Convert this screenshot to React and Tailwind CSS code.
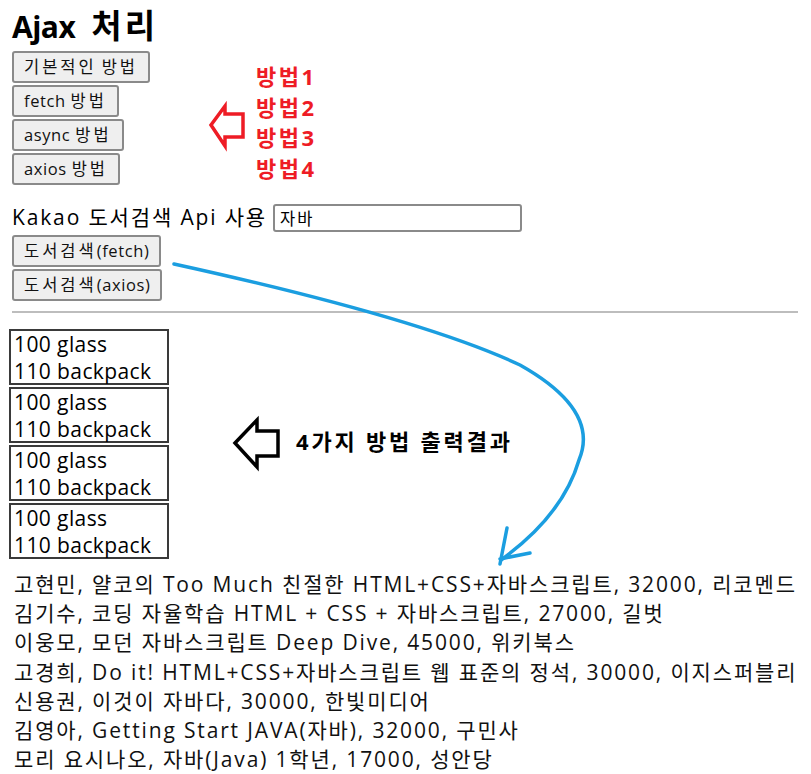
const BOOKS = [
  '고현민, 얄코의 Too Much 친절한 HTML+CSS+자바스크립트, 32000, 리코멘드',
  '김기수, 코딩 자율학습 HTML + CSS + 자바스크립트, 27000, 길벗',
  '이웅모, 모던 자바스크립트 Deep Dive, 45000, 위키북스',
  '고경희, Do it! HTML+CSS+자바스크립트 웹 표준의 정석, 30000, 이지스퍼블리',
  '신용권, 이것이 자바다, 30000, 한빛미디어',
  '김영아, Getting Start JAVA(자바), 32000, 구민사',
  '모리 요시나오, 자바(Java) 1학년, 17000, 성안당',
]

const METHODS = ['기본적인 방법', 'fetch 방법', 'async 방법', 'axios 방법']

// hangul runs get wider letter spacing than latin ones, like the original font
const split = (s) =>
  s.split(/([가-힣]+)/).filter(Boolean).map((part, i) =>
    /[가-힣]/.test(part) ? (
      <span key={i} className="tracking-[3px]">{part}</span>
    ) : (
      <span key={i} className="tracking-[0.6px]">{part}</span>
    )
  )

function Btn({ children }) {
  return (
    <button className="block h-[32px] px-[10px] mb-[2px] text-[16.5px] leading-none text-[#111] bg-[#efefef] border-2 border-[#8a8a8a] rounded-[3px]">
      {split(children)}
    </button>
  )
}

export default function App() {
  return (
    <div
      className="relative w-[811px] h-[774px] overflow-hidden bg-white text-black pl-[12px] pr-[13px]"
      style={{ fontFamily: '"Open Sans", "Noto Sans CJK KR", sans-serif' }}
    >
      <h2 className="flex items-baseline h-[51px] pt-[4px] text-[30px] font-bold leading-[44px] tracking-[-0.5px]">
        <span>Ajax</span>
        <span className="ml-[16px] text-[33px] tracking-[3px]">처리</span>
      </h2>

      {METHODS.map((m) => (
        <Btn key={m}>{m}</Btn>
      ))}

      <div className="flex items-center h-[31px] mt-[17px] text-[21px] tracking-[1.85px]">
        <span className="mr-[6px]">Kakao 도서검색 Api 사용</span>
        <input
          defaultValue="자바"
          className="w-[249px] h-[28px] px-[5px] text-[16.5px] tracking-[2px] border-2 border-[#8a8a8a] rounded-[3px] outline-none"
        />
      </div>
      <div className="mt-[2px]">
        <Btn>도서검색(fetch)</Btn>
        <Btn>도서검색(axios)</Btn>
      </div>

      <hr className="mt-[10px] mb-[16px] border-t-2 border-[#bdbdbd]" />

      <div className="-ml-[3px] flex flex-col gap-[2px]">
        {[0, 1, 2, 3].map((i) => (
          <div key={i} className="w-[160px] h-[56px] border-2 border-[#3a3a3a] pl-[3px] text-[21px] tracking-[0.4px] leading-[27px]">
            <div>100 glass</div>
            <div>110 backpack</div>
          </div>
        ))}
      </div>

      <div className="mt-[11px] pl-[2px] text-[21px] leading-[29.2px] tracking-[1.85px] text-[#111] whitespace-nowrap">
        {BOOKS.map((b) => (
          <div key={b}>{b}</div>
        ))}
      </div>

      {/* annotations */}
      <div className="absolute left-[256px] top-[61px] text-[22px] font-bold tracking-[2.5px] leading-[30.5px] text-[#ee1c25]">
        <div>방법1</div>
        <div>방법2</div>
        <div>방법3</div>
        <div>방법4</div>
      </div>
      <div className="absolute left-[296px] top-[425px] text-[22px] font-bold tracking-[2.8px]">4가지 방법 출력결과</div>

      <svg className="absolute inset-0 pointer-events-none" width="811" height="774">
        <polygon
          points="211,125 225,106 225,114 243,114 243,137 225,137 225,146"
          fill="none"
          stroke="#ee1c25"
          strokeWidth="3.5"
        />
        <polygon
          points="235,443 257,420 257,431 278,431 278,456 257,456 257,467"
          fill="none"
          stroke="#000"
          strokeWidth="3.5"
        />
        <path
          d="M174 264 Q 420 318 520 365 Q 600 410 579 460 Q 563 515 501 560"
          fill="none"
          stroke="#1b9ee0"
          strokeWidth="3.5"
          strokeLinecap="round"
        />
        <path d="M507 528 L 500 564 M 530 553 L 500 559" fill="none" stroke="#1b9ee0" strokeWidth="3.5" strokeLinecap="round" />
      </svg>
    </div>
  )
}
